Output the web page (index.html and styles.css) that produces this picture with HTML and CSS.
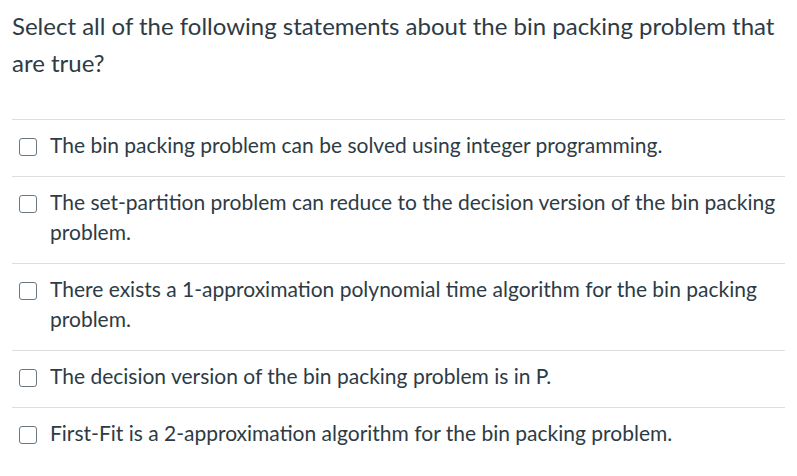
FILE: index.html
```html
<!DOCTYPE html>
<html>
<head>
<meta charset="utf-8">
<link rel="stylesheet" href="styles.css">
</head>
<body>
<div class="question">
  <p class="prompt">Select all of the following statements about the bin packing problem that are true?</p>
  <div class="answers">
    <label class="answer"><span class="box"></span><span class="text">The bin packing problem can be solved using integer programming.</span></label>
    <label class="answer"><span class="box"></span><span class="text">The set-partition problem can reduce to the decision version of the bin packing problem.</span></label>
    <label class="answer"><span class="box"></span><span class="text">There exists a 1-approximation polynomial time algorithm for the bin packing problem.</span></label>
    <label class="answer"><span class="box"></span><span class="text">The decision version of the bin packing problem is in P.</span></label>
    <label class="answer"><span class="box"></span><span class="text">First-Fit is a 2-approximation algorithm for the bin packing problem.</span></label>
  </div>
</div>
</body>
</html>
```
FILE: styles.css
```css
html, body {
  margin: 0;
  padding: 0;
  background: #ffffff;
}
body {
  font-family: Lato, "Liberation Sans", sans-serif;
  color: #2d3b45;
}
.question {
  width: 773px;
  margin-left: 12px;
  padding-top: 7px;
}
.prompt {
  margin: 0 0 38px 0;
  font-size: 24px;
  line-height: 37px;
}
.answers {
  display: flex;
  flex-direction: column;
}
.answer {
  display: flex;
  align-items: flex-start;
  gap: 13px;
  border-top: 1px solid #dcdfe2;
  padding: 10px 0 16px 7px;
  font-size: 21px;
  line-height: 30px;
}
.box {
  flex: none;
  width: 16px;
  height: 16px;
  margin-top: 8px;
  border: 1px solid #6b7780;
  border-radius: 3px;
  background: #fff;
}
```
